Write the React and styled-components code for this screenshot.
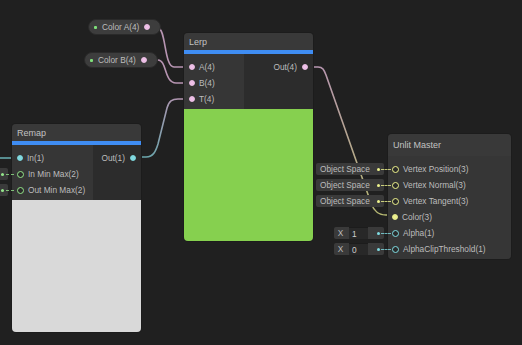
import React from "react";
import styled, { createGlobalStyle } from "styled-components";

const PINK = "#f1c2ea";
const YELLOW = "#eef38d";
const GREEN = "#93e58a";
const CYAN = "#7fdce2";

const GlobalStyle = createGlobalStyle`
  html, body {
    margin: 0;
    padding: 0;
    background: #202020;
  }
  body {
    font-family: "Liberation Sans", Arial, sans-serif;
  }
`;

const Canvas = styled.div`
  position: relative;
  width: 522px;
  height: 345px;
  overflow: hidden;
  background: #202020;
  color: #bdbdbd;
  font-size: 8.3px;
`;

const Wires = styled.svg`
  position: absolute;
  left: 0;
  top: 0;
`;

const Node = styled.div`
  position: absolute;
  left: ${(p) => p.$x}px;
  top: ${(p) => p.$y}px;
  width: ${(p) => p.$w}px;
  box-sizing: border-box;
  display: flex;
  flex-direction: column;
  background: #2c2c2c;
  border: 1px solid rgba(0, 0, 0, 0.35);
  border-radius: 5px;
`;

const Title = styled.div`
  height: ${(p) => p.$h || 17}px;
  display: flex;
  align-items: center;
  padding-left: 5px;
  background: #393939;
  border-radius: 4px 4px 0 0;
  font-size: 9px;
  color: #c2c2c2;
`;

const Accent = styled.div`
  height: 4px;
  background: #3f8df3;
`;

const Ports = styled.div`
  display: flex;
`;

const InputCol = styled.div`
  width: ${(p) => (p.$w ? `${p.$w}px` : "auto")};
  flex: ${(p) => (p.$w ? "none" : 1)};
  background: #363636;
  padding: 5px 0 ${(p) => p.$bottom || 2}px;
  display: flex;
  flex-direction: column;
  border-radius: ${(p) => (p.$w ? "0" : "0 0 4px 4px")};
`;

const OutputCol = styled.div`
  flex: 1;
  background: #2c2c2c;
  padding: 5px 0 2px;
  display: flex;
  flex-direction: column;
  align-items: flex-end;
`;

const Row = styled.div`
  position: relative;
  height: 16px;
  display: flex;
  align-items: center;
  gap: ${(p) => p.$gap || 4}px;
  padding: 0 5px 0 ${(p) => p.$left || 5}px;
  white-space: nowrap;
`;

const Port = styled.span`
  flex: none;
  box-sizing: border-box;
  width: ${(p) => (p.$filled ? 6 : 7)}px;
  height: ${(p) => (p.$filled ? 6 : 7)}px;
  border-radius: 50%;
  border: ${(p) => (p.$filled ? 1 : 1.5)}px solid ${(p) => p.$color};
  background: ${(p) =>
    p.$filled
      ? `radial-gradient(circle, ${p.$color} 0 35%, #b58fb0 36% 55%, ${p.$color} 56%)`
      : "#2a2a2a"};
`;

const Preview = styled.div`
  height: ${(p) => p.$h}px;
  background: ${(p) => p.$color};
  border-radius: 0 0 4px 4px;
`;

const Pill = styled.div`
  position: absolute;
  left: ${(p) => p.$x}px;
  top: ${(p) => p.$y}px;
  height: 16px;
  display: flex;
  align-items: center;
  gap: 5px;
  padding: 0 10px 0 5px;
  background: #3d3d3d;
  border: 1px solid #2a2a2a;
  border-radius: 9px;
  box-sizing: border-box;
  white-space: nowrap;
`;

const Swatch = styled.span`
  width: 3px;
  height: 3px;
  background: #7fe07a;
  border-radius: 1px;
`;

const Field = styled.div`
  position: absolute;
  right: calc(100% + 4px);
  top: 2px;
  width: ${(p) => p.$w}px;
  height: 12px;
  display: flex;
  align-items: center;
  background: #3a3a3a;
  border-radius: 2px;
  white-space: nowrap;
`;

const FieldText = styled.span`
  flex: 1;
  padding-left: 4px;
  color: #bcbcbc;
`;

const AxisLabel = styled.span`
  width: 13px;
  text-align: center;
  color: #bdbdbd;
  margin-right: 2px;
`;

const NumberInput = styled.span`
  width: 19px;
  height: 12px;
  box-sizing: border-box;
  padding: 1px 0 0 3px;
  background: #282828;
  border-top: 1px solid #1c1c1c;
  color: #cfcfcf;
  line-height: 10px;
  margin-right: auto;
`;

const DotSlot = styled.span`
  width: 12px;
  display: flex;
  justify-content: center;
  &::before {
    content: "";
    width: 3px;
    height: 3px;
    border-radius: 50%;
    background: ${(p) => p.$color};
  }
`;

const Link = styled.span`
  position: absolute;
  left: ${(p) => p.$from || -7}px;
  width: ${(p) => p.$len || 10}px;
  top: 8px;
  border-top: 1px dashed ${(p) => p.$color};
  opacity: 0.8;
`;

function Wire({ d, from, to, x1, y1, x2, y2, id }) {
  if (from === to) {
    return <path d={d} fill="none" stroke={from} strokeOpacity="0.72" strokeWidth="1.6" />;
  }
  return (
    <>
      <defs>
        <linearGradient id={id} gradientUnits="userSpaceOnUse" x1={x1} y1={y1} x2={x2} y2={y2}>
          <stop offset="0" stopColor={from} />
          <stop offset="1" stopColor={to} />
        </linearGradient>
      </defs>
      <path d={d} fill="none" stroke={`url(#${id})`} strokeOpacity="0.72" strokeWidth="1.6" />
    </>
  );
}

const masterRows = [
  { label: "Vertex Position(3)", color: YELLOW, field: "space" },
  { label: "Vertex Normal(3)", color: YELLOW, field: "space" },
  { label: "Vertex Tangent(3)", color: YELLOW, field: "space" },
  { label: "Color(3)", color: YELLOW, filled: true },
  { label: "Alpha(1)", color: CYAN, field: "1" },
  { label: "AlphaClipThreshold(1)", color: CYAN, field: "0" },
];

export default function App() {
  return (
    <Canvas>
      <GlobalStyle />
      <Wires width="522" height="345">
        <Wire d="M150 28 H158 C166 28 164 67 174 67 H186" from={PINK} to={PINK} />
        <Wire d="M146 60 H158 C167 60 164 83 176 83 H186" from={PINK} to={PINK} />
        <Wire
          id="gT"
          d="M137 157 H146 C154 157 156 150 158 144 L167 108 C169 101 172 99 178 99 H186"
          from={CYAN}
          to={PINK}
          x1="137"
          y1="157"
          x2="186"
          y2="99"
        />
        <Wire
          id="gC"
          d="M309 67 H318 C323 67 324 70 326 75 L371 203 C374 211 378 215 386 215 H392"
          from={PINK}
          to={YELLOW}
          x1="309"
          y1="67"
          x2="392"
          y2="215"
        />
        <Wire d="M-5 158 H16" from={CYAN} to={CYAN} />
      </Wires>

      <Pill $x={88} $y={19}>
        <Swatch />
        Color A(4)
        <Port $filled $color={PINK} />
      </Pill>
      <Pill $x={84} $y={52}>
        <Swatch />
        Color B(4)
        <Port $filled $color={PINK} />
      </Pill>

      <Node $x={183} $y={32} $w={131}>
        <Title>Lerp</Title>
        <Accent />
        <Ports>
          <InputCol $w={60}>
            <Row>
              <Port $filled $color={PINK} />
              A(4)
            </Row>
            <Row>
              <Port $filled $color={PINK} />
              B(4)
            </Row>
            <Row>
              <Port $filled $color={PINK} />
              T(4)
            </Row>
          </InputCol>
          <OutputCol>
            <Row $gap={5}>
              Out(4)
              <Port $filled $color={PINK} />
            </Row>
          </OutputCol>
        </Ports>
        <Preview $h={132} $color="#86d04f" />
      </Node>

      <Node $x={11} $y={123} $w={131}>
        <Title>Remap</Title>
        <Accent />
        <Ports>
          <InputCol $w={81}>
            <Row>
              <Port $filled $color={CYAN} />
              In(1)
            </Row>
            <Row>
              <Field $w={40}>
                <FieldText />
                <DotSlot $color={GREEN} />
              </Field>
              <Link $color={GREEN} $from={-11} $len={13} />
              <Port $color={GREEN} />
              In Min Max(2)
            </Row>
            <Row>
              <Field $w={40}>
                <FieldText />
                <DotSlot $color={GREEN} />
              </Field>
              <Link $color={GREEN} $from={-11} $len={13} />
              <Port $color={GREEN} />
              Out Min Max(2)
            </Row>
          </InputCol>
          <OutputCol>
            <Row $gap={5}>
              Out(1)
              <Port $filled $color={CYAN} />
            </Row>
          </OutputCol>
        </Ports>
        <Preview $h={132} $color="#d9d9d9" />
      </Node>

      <Node $x={387} $y={133} $w={125}>
        <Title $h={22}>Unlit Master</Title>
        <InputCol $bottom={2}>
          {masterRows.map((r) => (
            <Row key={r.label} $left={4}>
              {r.field === "space" && (
                <Field $w={68}>
                  <FieldText>Object Space</FieldText>
                  <DotSlot $color={r.color} />
                </Field>
              )}
              {r.field && r.field !== "space" && (
                <Field $w={50}>
                  <AxisLabel>X</AxisLabel>
                  <NumberInput>{r.field}</NumberInput>
                  <DotSlot $color={r.color} />
                </Field>
              )}
              {r.field && <Link $color={r.color} />}
              <Port $filled={r.filled} $color={r.color} />
              {r.label}
            </Row>
          ))}
        </InputCol>
      </Node>
    </Canvas>
  );
}
